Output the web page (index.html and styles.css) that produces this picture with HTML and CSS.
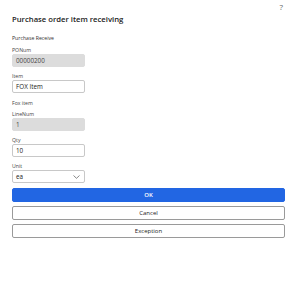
FILE: index.html
```html
<!DOCTYPE html>
<html lang="en">
<head>
  <meta charset="UTF-8">
  <title>Purchase order item receiving</title>
  <link rel="stylesheet" href="styles.css">
</head>
<body>
  <div class="dialog">
    <div class="help">?</div>
    <div class="dialog-title">Purchase order item receiving</div>

    <div class="group-title">Purchase Receive</div>

    <div class="field-label first">PONum</div>
    <div class="field-input readonly">00000200</div>

    <div class="field-label">Item</div>
    <div class="field-input">FOX Item</div>

    <div class="static-text">Fox item</div>

    <div class="field-label tight">LineNum</div>
    <div class="field-input readonly">1</div>

    <div class="field-label">Qty</div>
    <div class="field-input">10</div>

    <div class="field-label">Unit</div>
    <div class="field-input select">
      <span>ea</span>
      <svg class="chevron" width="7" height="4" viewBox="0 0 7 4">
        <path d="M0.5 0.5 L3.5 3.3 L6.5 0.5" fill="none" stroke="#555" stroke-width="0.7"/>
      </svg>
    </div>

    <div class="button-stack">
      <button class="btn primary">OK</button>
      <button class="btn">Cancel</button>
      <button class="btn">Exception</button>
    </div>
  </div>
</body>
</html>
```

FILE: styles.css
```css
body {
  margin: 0;
  background: #fff;
  font-family: "Open Sans", "Noto Sans", sans-serif;
  color: #323130;
}

.dialog {
  position: relative;
  padding: 13px 6px 20px 12px;
}

.help {
  position: absolute;
  top: 1px;
  right: 8px;
  font-size: 8px;
  color: #666;
}

.dialog-title {
  font-size: 7.7px;
  font-weight: 600;
  line-height: 12px;
  color: #222;
}

.group-title {
  margin-top: 9px;
  font-size: 5.2px;
  line-height: 8px;
}

.field-label {
  margin-top: 5px;
  font-size: 5.2px;
  line-height: 8px;
  color: #444;
}

.field-label.first {
  margin-top: 4px;
}

.field-label.tight {
  margin-top: 3px;
}

.static-text {
  margin-top: 6px;
  font-size: 5.2px;
  line-height: 8px;
  color: #444;
}

.field-input {
  box-sizing: border-box;
  width: 73px;
  height: 13px;
  padding: 0 3px;
  border: 1px solid #c8c8c8;
  border-radius: 2px;
  font-size: 6.3px;
  line-height: 11px;
  color: #222;
}

.field-input.readonly {
  background: #dcdcdc;
  border-color: #dcdcdc;
  color: #444;
}

.field-input.select {
  display: flex;
  align-items: center;
  justify-content: space-between;
}

.chevron {
  margin-right: 1px;
}

.button-stack {
  display: flex;
  flex-direction: column;
  gap: 4px;
  margin-top: 5px;
}

.btn {
  box-sizing: border-box;
  height: 14px;
  padding: 0;
  border: 1px solid #9a9a9a;
  border-radius: 2px;
  background: #fff;
  font-family: inherit;
  font-size: 6px;
  color: #222;
  cursor: pointer;
}

.btn.primary {
  background: #2266e3;
  border-color: #2266e3;
  color: #fff;
  font-weight: 600;
}
```
